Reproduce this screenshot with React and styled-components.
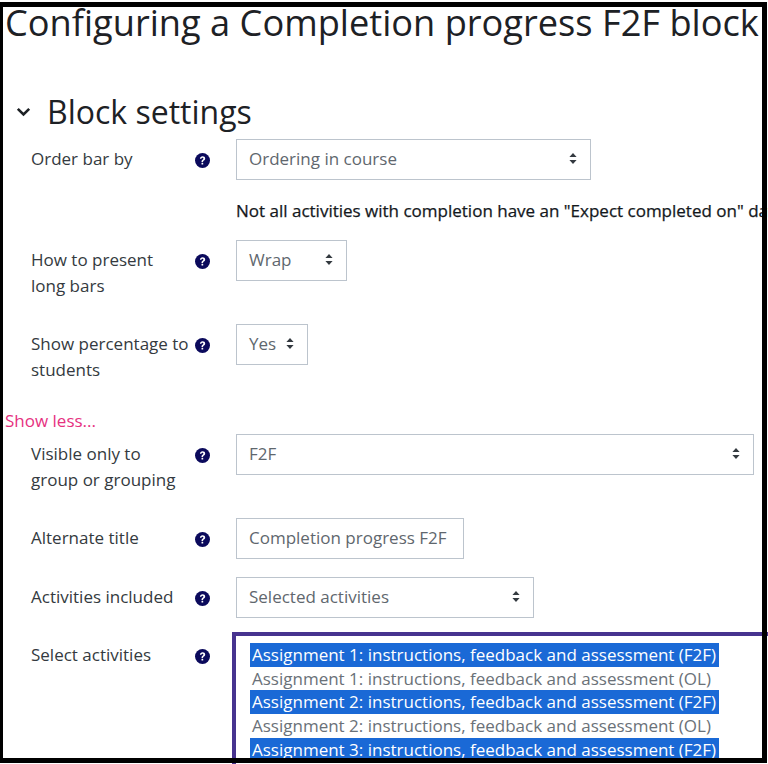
import React from 'react';
import styled, { createGlobalStyle } from 'styled-components';

const Global = createGlobalStyle`
  html, body { margin: 0; padding: 0; background: #fff; }
  body { font-family: "Open Sans", "Noto Sans", sans-serif; color: #343a40; }
`;

const Page = styled.div`
  position: relative;
  width: 768px;
  height: 764px;
  overflow: hidden;
  background: #fff;
`;

const Frame = styled.div`
  position: absolute;
  left: 0;
  top: 2px;
  width: 767px;
  height: 761px;
  box-sizing: border-box;
  border: 5px solid #000;
  border-left-width: 3px;
  pointer-events: none;
  z-index: 2;
`;

const Content = styled.div`
  display: flex;
  flex-direction: column;
  padding-top: 1px;
`;

const Title = styled.h1`
  margin: 0 0 0 5px;
  font-size: 36.2px;
  line-height: 42px;
  font-weight: 400;
  color: #1d2125;
  white-space: nowrap;
`;

const SectionHead = styled.div`
  display: flex;
  align-items: center;
  gap: 16px;
  margin: 47px 0 0 16px;
  height: 44px;
`;

const SectionTitle = styled.h2`
  margin: 0;
  font-size: 32px;
  line-height: 44px;
  font-weight: 400;
  color: #1d2125;
`;

const Row = styled.div`
  display: grid;
  grid-template-columns: 160px 45px 1fr;
  margin-left: 31px;
  margin-top: ${p => p.$top}px;
  min-height: ${p => p.$min || 40}px;
`;

const Label = styled.div`
  font-size: 17px;
  line-height: 26px;
  padding-top: ${p => 7 + (p.$drop || 0)}px;
  color: #343a40;
  white-space: nowrap;
`;

const HelpCell = styled.div`
  display: flex;
  justify-content: flex-end;
  align-items: flex-start;
  padding: ${p => 14 + (p.$drop || 0)}px 26px 0 0;
  box-sizing: border-box;
`;

const Select = styled.div`
  box-sizing: border-box;
  display: flex;
  align-items: center;
  justify-content: space-between;
  width: ${p => p.$w}px;
  height: 41px;
  padding: 0 13px 2px 12px;
  border: 1px solid #bcc4cd;
  font-size: 17px;
  color: #5f676e;
  white-space: nowrap;
`;

const Note = styled.div`
  margin: 21px 0 0 236px;
  font-size: 17px;
  line-height: 20px;
  font-weight: 400;
  color: #14181c;
  -webkit-text-stroke: 0.25px #14181c;
  white-space: nowrap;
`;

const ShowLess = styled.div`
  margin: 25px 0 0 5px;
  font-size: 17px;
  line-height: 26px;
  color: #e6317f;
`;

const ListBox = styled.div`
  box-sizing: border-box;
  width: 560px;
  height: 200px;
  margin-left: -4px;
  padding: 7px 14px;
  border: 4px solid #47338f;
  overflow: hidden;
`;

const Option = styled.div`
  width: max-content;
  height: 23.7px;
  padding: 0 3px 0 2px;
  font-size: 17px;
  line-height: 23.7px;
  white-space: nowrap;
  color: ${p => p.$sel ? '#fff' : '#6a7178'};
  background: ${p => p.$sel ? '#1a69d6' : 'transparent'};
`;

const Help = () => (
  <svg width="15" height="15" viewBox="0 0 15 15" aria-hidden="true">
    <circle cx="7.5" cy="7.5" r="7.5" fill="#0b0a5c" />
    <path d="M4.9 5.7c.1-1.6 1.2-2.5 2.7-2.5 1.5 0 2.6.9 2.6 2.2 0 1.1-.6 1.6-1.3 2.1-.5.4-.8.6-.8 1.2v.2H6.5v-.4c0-.9.4-1.4 1-1.8.5-.4.9-.7.9-1.2 0-.5-.4-.8-.9-.8-.6 0-1 .4-1 1h-1.6z" fill="#fff" />
    <rect x="6.5" y="9.8" width="1.7" height="1.8" rx=".3" fill="#fff" />
  </svg>
);

const Updown = () => (
  <svg width="8" height="11" viewBox="0 0 8 11" aria-hidden="true">
    <path d="M4 0l3.6 4H.4zM4 11L.4 7h7.2z" fill="#343a40" />
  </svg>
);

const Chevron = () => (
  <svg width="15" height="10" viewBox="0 0 15 10" aria-hidden="true">
    <path d="M1.8 1.8L7.5 7.5l5.7-5.7" fill="none" stroke="#1d2125" strokeWidth="2.6" />
  </svg>
);

const options = [
  ['Assignment 1: instructions, feedback and assessment (F2F)', true],
  ['Assignment 1: instructions, feedback and assessment (OL)', false],
  ['Assignment 2: instructions, feedback and assessment (F2F)', true],
  ['Assignment 2: instructions, feedback and assessment (OL)', false],
  ['Assignment 3: instructions, feedback and assessment (F2F)', true],
];

const SelectRow = ({ top, min, label, value, w, plain }) => (
  <Row $top={top} $min={min}>
    <Label>{label}</Label>
    <HelpCell><Help /></HelpCell>
    <Select $w={w}>{value}{!plain && <Updown />}</Select>
  </Row>
);

export default function App() {
  return (
    <Page>
      <Global />
      <Content>
        <Title>Configuring a Completion progress F2F block</Title>
        <SectionHead>
          <Chevron />
          <SectionTitle>Block settings</SectionTitle>
        </SectionHead>
        <SelectRow top={5} label="Order bar by" value="Ordering in course" w={355} />
        <Note>Not all activities with completion have an "Expect completed on" date set.</Note>
        <SelectRow top={19} min={59} label={<>How to present<br />long bars</>} value="Wrap" w={111} />
        <SelectRow top={25} min={59} label={<>Show percentage to<br />students</>} value="Yes" w={72} />
        <ShowLess>Show less...</ShowLess>
        <SelectRow top={0} min={59} label={<>Visible only to<br />group or grouping</>} value="F2F" w={518} />
        <SelectRow top={25} label="Alternate title" value="Completion progress F2F" w={228} plain />
        <SelectRow top={18} label="Activities included" value="Selected activities" w={298} />
        <Row $top={14}>
          <Label $drop={3}>Select activities</Label>
          <HelpCell $drop={3}><Help /></HelpCell>
          <ListBox>
            {options.map(([text, sel]) => <Option key={text} $sel={sel}>{text}</Option>)}
          </ListBox>
        </Row>
      </Content>
      <Frame />
    </Page>
  );
}
